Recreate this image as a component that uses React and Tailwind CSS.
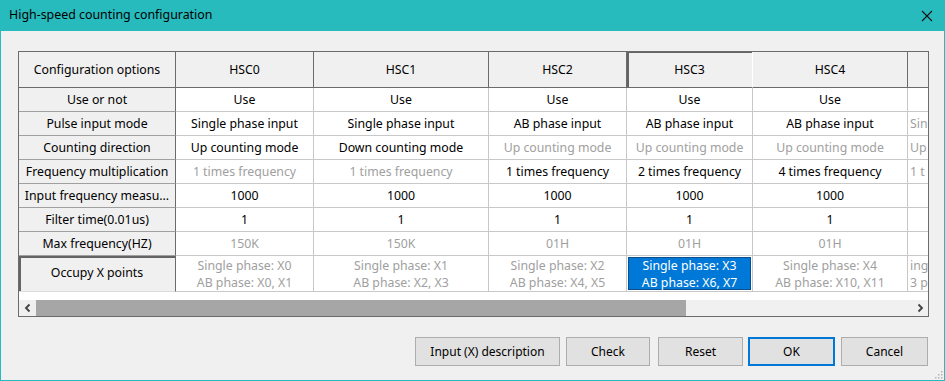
import React from 'react';

const COLS = ['HSC0', 'HSC1', 'HSC2', 'HSC3', 'HSC4'];

// each value: [text, gray?] - the last one is the clipped HSC5 column
const ROWS = [
  {
    label: 'Use or not',
    cells: [['Use'], ['Use'], ['Use'], ['Use'], ['Use'], ['']],
  },
  {
    label: 'Pulse input mode',
    cells: [
      ['Single phase input'],
      ['Single phase input'],
      ['AB phase input'],
      ['AB phase input'],
      ['AB phase input'],
      ['Sin', true],
    ],
  },
  {
    label: 'Counting direction',
    cells: [
      ['Up counting mode'],
      ['Down counting mode'],
      ['Up counting mode', true],
      ['Up counting mode', true],
      ['Up counting mode', true],
      ['Up', true],
    ],
  },
  {
    label: 'Frequency multiplication',
    cells: [
      ['1 times frequency', true],
      ['1 times frequency', true],
      ['1 times frequency'],
      ['2 times frequency'],
      ['4 times frequency'],
      ['1 t', true],
    ],
  },
  {
    label: 'Input frequency measu...',
    cells: [['1000'], ['1000'], ['1000'], ['1000'], ['1000'], ['']],
  },
  {
    label: 'Filter time(0.01us)',
    cells: [['1'], ['1'], ['1'], ['1'], ['1'], ['']],
  },
  {
    label: 'Max frequency(HZ)',
    cells: [
      ['150K', true],
      ['150K', true],
      ['01H', true],
      ['01H', true],
      ['01H', true],
      [''],
    ],
  },
];

const OCCUPY = [
  ['Single phase: X0', 'AB phase: X0, X1'],
  ['Single phase: X1', 'AB phase: X2, X3'],
  ['Single phase: X2', 'AB phase: X4, X5'],
  ['Single phase: X3', 'AB phase: X6, X7'],
  ['Single phase: X4', 'AB phase: X10, X11'],
];

const Chevron = ({ dir }) => (
  <svg width="8" height="10" viewBox="0 0 8 10">
    <path
      d={dir === 'left' ? 'M5.5 1.5 L2 5 L5.5 8.5' : 'M2.5 1.5 L6 5 L2.5 8.5'}
      fill="none"
      stroke="#404040"
      strokeWidth="1.8"
    />
  </svg>
);

const Btn = ({ children, w, primary }) => (
  <button
    className={
      primary
        ? 'h-[29px] bg-[#e1e1e1] border-2 border-[#0078d7] text-[12px] text-black'
        : 'h-[29px] bg-[#e1e1e1] border border-[#adadad] text-[12px] text-black'
    }
    style={{ width: w }}
  >
    {children}
  </button>
);

export default function App() {
  return (
    <div
      className="w-[945px] h-[381px] bg-[#f0f0f0] border-x border-b border-[#26bbbe] flex flex-col overflow-hidden relative"
      style={{ fontFamily: '"Noto Sans", "Noto Sans CJK SC", sans-serif' }}
    >
      {/* title bar */}
      <div className="h-[31px] -mx-px bg-[#27bbbd] flex items-center justify-between pl-[9px] pr-[9px] shrink-0">
        <span className="text-[12.4px] text-black">High-speed counting configuration</span>
        <svg width="12" height="12" viewBox="0 0 12 12" className="mr-[3px]">
          <path d="M1 1 L11 11 M11 1 L1 11" stroke="#111" strokeWidth="1.1" />
        </svg>
      </div>

      {/* table frame */}
      <div className="mt-[20px] ml-[17px] w-[911px] h-[266px] border border-[#6b6b6b] bg-white flex flex-col text-[12.3px]">
        <div className="grid grid-cols-[157px_138px_175px_138px_126px_155px_20px] grid-rows-[36px_repeat(7,24px)_36px] overflow-hidden">
          {/* header */}
          <div className="bg-[#f0f0f0] border-r border-b border-[#6b6b6b] flex items-center justify-center pt-px text-black">
            Configuration options
          </div>
          {COLS.map((c) => (
            <div
              key={c}
              className={
                c === 'HSC3'
                  ? 'bg-[#f0f0f0] border-r border-r-white border-b border-b-[#6b6b6b] shadow-[inset_2px_1px_0_#646464] flex items-center justify-center pt-px text-black'
                  : 'bg-[#f0f0f0] border-r border-b border-[#6b6b6b] flex items-center justify-center pt-px text-black'
              }
            >
              {c}
            </div>
          ))}
          <div className="bg-[#f0f0f0] border-b border-[#6b6b6b]" />

          {/* body rows */}
          {ROWS.map((r) => (
            <React.Fragment key={r.label}>
              <div className="bg-[#f0f0f0] border-r border-r-[#6b6b6b] border-b border-b-[#a0a0a0] flex items-center justify-center pt-px text-black whitespace-nowrap">
                {r.label}
              </div>
              {r.cells.map(([t, gray], i) => (
                <div
                  key={i}
                  className={
                    (i === 5
                      ? 'border-b border-[#c8c8c8] flex items-center justify-start pl-[2px] pt-px whitespace-nowrap '
                      : 'border-r border-b border-[#c8c8c8] flex items-center justify-center pt-px whitespace-nowrap ') +
                    (gray ? 'text-[#a0a0a0]' : 'text-black')
                  }
                >
                  {t}
                </div>
              ))}
            </React.Fragment>
          ))}

          {/* occupy row */}
          <div className="bg-[#f0f0f0] border-r border-r-[#6b6b6b] border-b border-b-[#dcdcdc] shadow-[inset_2px_2px_0_#646464] flex items-center justify-center text-black">
            Occupy X points
          </div>
          {OCCUPY.map(([a, b], i) =>
            i === 3 ? (
              <div key={i} className="border-r border-b border-[#c8c8c8] p-px">
                <div className="h-full bg-[#0078d7] border border-[#0a4f8f] flex flex-col items-center justify-center leading-[17px] text-white">
                  <span>{a}</span>
                  <span>{b}</span>
                </div>
              </div>
            ) : (
              <div
                key={i}
                className="border-r border-b border-[#c8c8c8] flex flex-col items-center justify-center leading-[17px] text-[#a0a0a0] whitespace-nowrap"
              >
                <span>{a}</span>
                <span>{b}</span>
              </div>
            )
          )}
          <div className="border-b border-[#c8c8c8] flex flex-col justify-center pl-[2px] leading-[17px] text-[#a0a0a0] whitespace-nowrap">
            <span>ing</span>
            <span>3 p</span>
          </div>
        </div>

        <div className="flex-1" />

        {/* horizontal scrollbar */}
        <div className="h-[16px] bg-[#f0f0f0] flex items-stretch">
          <div className="w-[17px] flex items-center justify-center">
            <Chevron dir="left" />
          </div>
          <div className="flex-1 flex">
            <div className="w-[650px] bg-[#a6a6a6]" />
          </div>
          <div className="w-[17px] flex items-center justify-center">
            <Chevron dir="right" />
          </div>
        </div>
      </div>

      {/* buttons */}
      <div className="mt-[20px] flex justify-end pr-[16px]">
        <Btn w={145}>Input (X) description</Btn>
        <div className="w-[6px]" />
        <Btn w={84}>Check</Btn>
        <div className="w-[8px]" />
        <Btn w={85}>Reset</Btn>
        <div className="w-[5px]" />
        <Btn w={87} primary>OK</Btn>
        <div className="w-[6px]" />
        <Btn w={87}>Cancel</Btn>
      </div>

      {/* resize grip */}
      <svg width="10" height="10" viewBox="0 0 10 10" className="absolute right-[1px] bottom-[1px]">
        {[
          [8, 2],
          [5, 5],
          [8, 5],
          [2, 8],
          [5, 8],
          [8, 8],
        ].map(([x, y]) => (
          <rect key={x + '-' + y} x={x} y={y} width="1.5" height="1.5" fill="#b4b4b4" />
        ))}
      </svg>
    </div>
  );
}
